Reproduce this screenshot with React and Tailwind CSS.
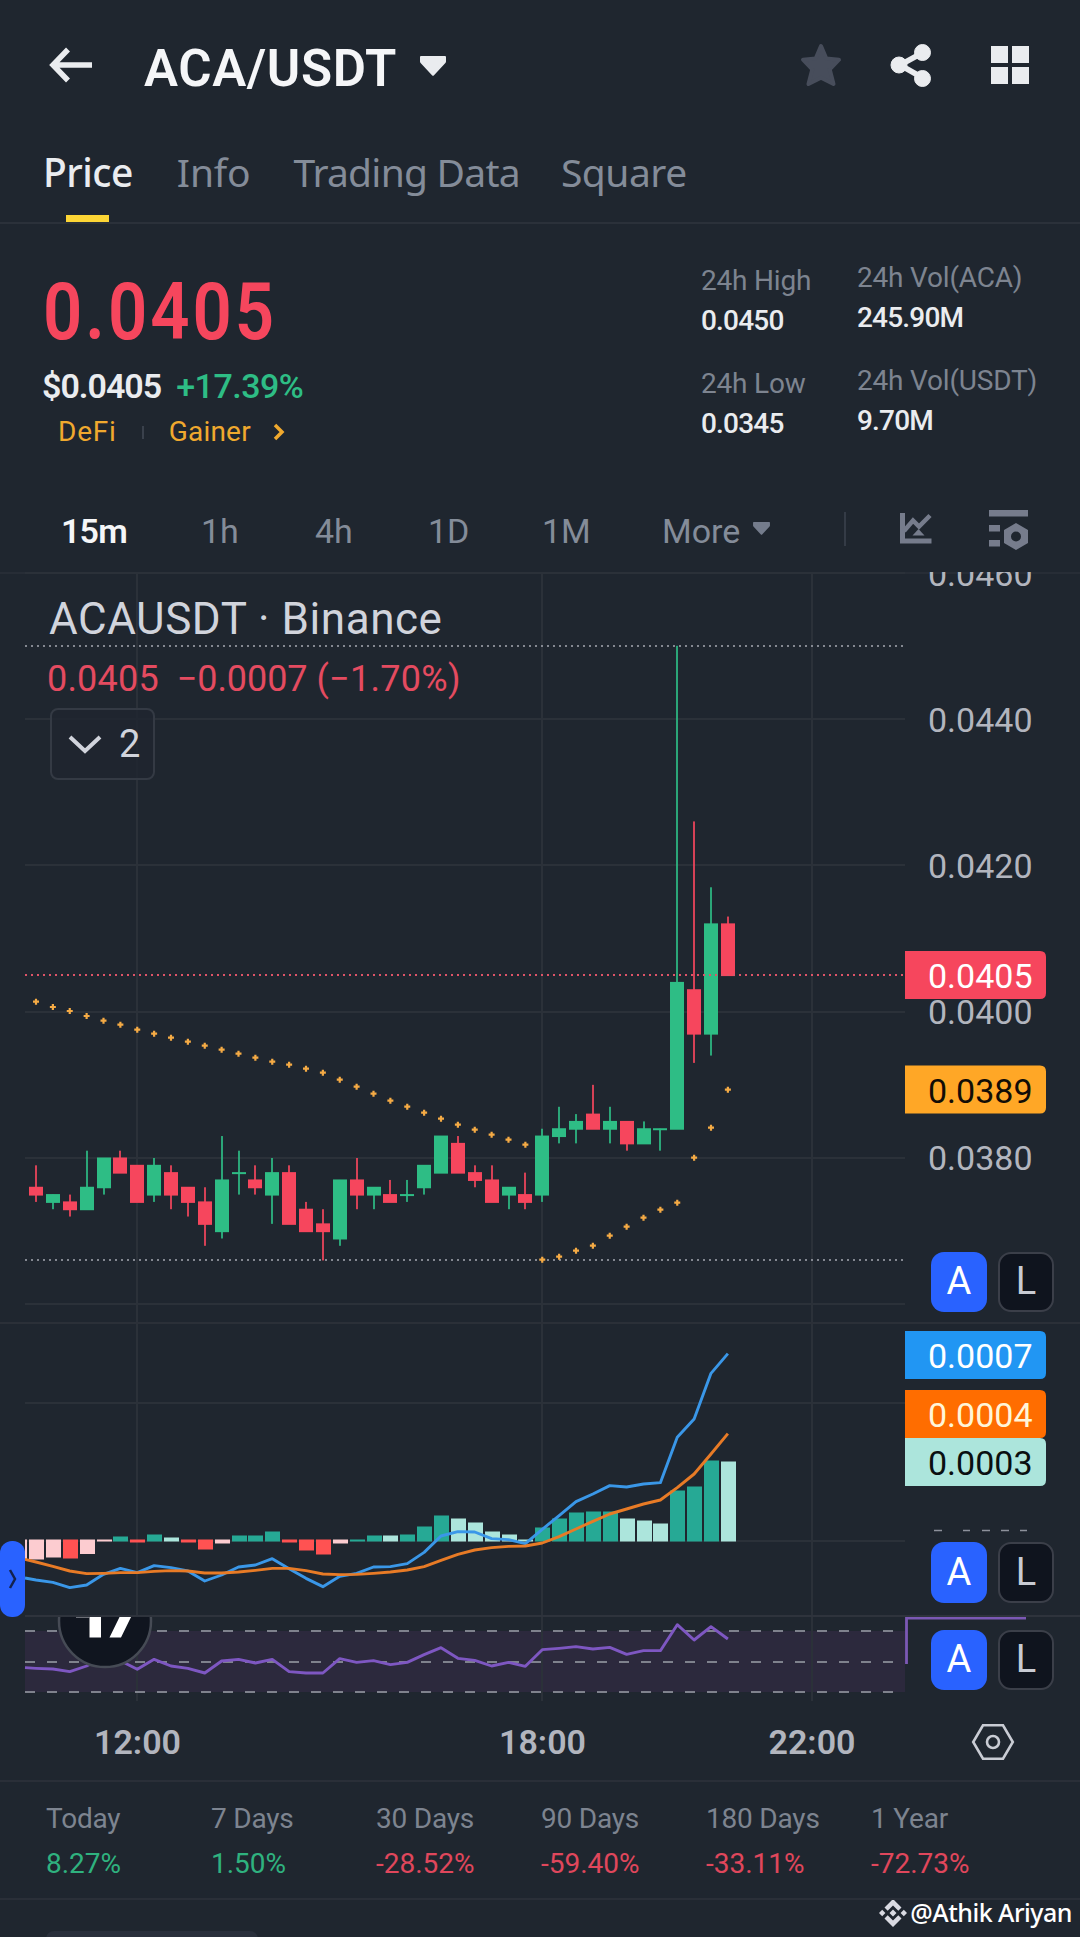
const GREEN = "#2ebd85";
const RED = "#f6465d";
const GRID = "#2b3139";
const STEP = 16.875;
const FIRST_X = 36;

const xAt = (i) => FIRST_X + i * STEP;
const yAt = (price) => 1158 - (price - 380) * 7.3167;

// [high, bodyTop, bodyBottom, low, up] in 1/10000 USDT
const candles = [
  [379, 376, 375, 374, 0],
  [375, 375, 374, 373, 1],
  [375, 374, 373, 372, 0],
  [381, 376, 373, 373, 1],
  [380, 380, 376, 375, 1],
  [381, 380, 378, 378, 0],
  [379, 379, 374, 374, 0],
  [380, 379, 375, 374, 1],
  [379, 378, 375, 373, 0],
  [376, 376, 374, 372, 0],
  [376, 374, 371, 368, 0],
  [383, 377, 370, 369, 1],
  [381, 378, 378, 375, 1],
  [379, 377, 376, 375, 0],
  [380, 378, 375, 371, 1],
  [379, 378, 371, 371, 0],
  [374, 373, 370, 370, 0],
  [373, 371, 370, 366, 0],
  [377, 377, 369, 368, 1],
  [380, 377, 375, 373, 0],
  [376, 376, 375, 373, 1],
  [377, 375, 374, 374, 0],
  [377, 375, 375, 374, 1],
  [379, 379, 376, 375, 1],
  [383, 383, 378, 378, 1],
  [383, 382, 378, 378, 0],
  [379, 378, 377, 376, 0],
  [379, 377, 374, 374, 0],
  [376, 376, 375, 373, 1],
  [378, 375, 374, 373, 0],
  [384, 383, 375, 374, 1],
  [387, 384, 383, 382, 1],
  [386, 385, 384, 382, 1],
  [390, 386, 384, 384, 0],
  [387, 385, 384, 382, 1],
  [385, 385, 382, 381, 0],
  [385, 384, 382, 382, 1],
  [384, 384, 384, 381, 1],
  [450, 404, 384, 384, 1],
  [426, 403, 397, 393, 0],
  [417, 412, 397, 394, 1],
  [413, 412, 405, 405, 0],
];

const sar = [
  1001.7, 1007, 1011, 1016, 1020.7, 1024.7, 1029.7, 1033.7, 1037.7, 1041.7, 1045.7,
  1049.7, 1053.7, 1057.7, 1061.7, 1064.7, 1068.7, 1072.7, 1079.7, 1086.7, 1093.7,
  1100.7, 1106.7, 1112.7, 1118.7, 1124.7, 1129.7, 1134.7, 1139.7, 1144.7, 1259.7,
  1256.7, 1250.7, 1245.7, 1235.7, 1226.7, 1217.7, 1209.7, 1202.7, 1157.7, 1127.7, 1089.7,
];

const HIST = { g: "#26a995", l: "#ace5dc", r: "#ff5252", p: "#fcccd0" };
// [height, colour key], negative heights hang under the zero line
const histogram = [
  [-20, "p"], [-18, "p"], [-19, "r"], [-14.5, "p"], [-2, "p"], [5, "g"], [-3, "r"],
  [7, "g"], [4, "l"], [-3, "r"], [-10, "r"], [-4, "p"], [6, "g"], [6, "g"], [10, "g"],
  [-3, "r"], [-11, "r"], [-15, "r"], [-4, "p"], [2, "g"], [6, "g"], [6, "l"], [7, "g"],
  [15, "g"], [26, "g"], [23, "l"], [19, "l"], [10, "l"], [7, "l"], [2, "l"], [14, "g"],
  [23, "g"], [29, "g"], [30, "g"], [30, "g"], [23, "l"], [21, "l"], [18, "l"],
  [51, "g"], [55, "g"], [81, "g"], [80, "l"],
];

// offsets below y = 1320, three units to a pixel
const macd = [
  780, 787, 803, 795, 763, 745, 758, 737, 743, 753, 783, 765, 741, 735, 716, 746, 775,
  800, 769, 760, 741, 740, 731, 697, 648, 635, 636, 656, 659, 671, 628, 587, 545, 522,
  497, 501, 492, 488, 352, 297, 160, 101,
];
const signal = [
  726, 739, 753, 761, 760, 758, 758, 754, 752, 753, 759, 759, 756, 751, 745, 745, 752,
  762, 764, 763, 760, 756, 750, 740, 721, 703, 690, 683, 679, 678, 669, 650, 627, 604,
  582, 567, 552, 540, 503, 462, 402, 341,
];
const rsi = [
  1045, 1047, 1055, 1038, 1012, 1022, 1048, 1018, 1038, 1045, 1059, 1023, 1018, 1029,
  1018, 1055, 1059, 1059, 1016, 1027, 1022, 1034, 1027, 1004, 983, 1015, 1021, 1038,
  1027, 1039, 989, 985, 980, 987, 982, 1003, 992, 992, 914, 960, 920, 957,
];

const toLine = (values, start) =>
  [`25,${1320 + start / 3}`, ...values.map((v, i) => `${xAt(i)},${1320 + v / 3}`)].join(" ");

const tabs = [
  { label: "Info", className: "ml-[44px] tracking-[-0.2px]" },
  { label: "Trading Data", className: "ml-[43px] tracking-[-0.75px]" },
  { label: "Square", className: "ml-[41px] tracking-[-0.5px]" },
];

const periods = [
  { label: "Today", value: "8.27%" },
  { label: "7 Days", value: "1.50%" },
  { label: "30 Days", value: "-28.52%" },
  { label: "90 Days", value: "-59.40%" },
  { label: "180 Days", value: "-33.11%" },
  { label: "1 Year", value: "-72.73%" },
];

function Caret({ className }) {
  return (
    <svg viewBox="0 0 26 20" className={className} fill="currentColor">
      <path d="M1 0h24q1 0 1 1v4.500q0 .8-.6 1.400L14 19.300q-1 1-2 0L.6 6.900Q0 6.300 0 5.500V1q0-1 1-1z" />
    </svg>
  );
}

function Header() {
  return (
    <header className="flex h-[130px] items-center pl-[49px] text-[#eaecef]">
      <svg viewBox="0 0 44 36" className="h-9 w-11" fill="none" stroke="currentColor" strokeWidth="5.500">
        <path d="M4 18h39M19 2.500L4 18l15 15.500" />
      </svg>
      <h1 className="ml-[51px] mt-[7px] text-[51px] leading-none font-semibold tracking-[0.6px] text-[#f5f6f8]">
        ACA/USDT
      </h1>
      <Caret className="ml-[23px] mt-[2px] h-5 w-[26px]" />
      <svg viewBox="0 0 42 44" className="ml-[354px] h-11 w-[42px]" fill="#474d5b" stroke="#474d5b" strokeWidth="4" strokeLinejoin="round">
        <path d="M21 3l5.300 12.500L39 16.700l-9.300 9.600L33.500 41 21 34.700 8.500 41l3.800-14.700L3 16.700l12.700-1.200z" />
      </svg>
      <svg viewBox="0 0 42 44" className="ml-[48px] h-11 w-[42px]" fill="currentColor" stroke="currentColor">
        <path d="M33 9.500L10 22l23 13" fill="none" strokeWidth="5.500" />
        <circle cx="32.500" cy="9.500" r="8" />
        <circle cx="9" cy="22" r="8" />
        <circle cx="32.500" cy="35.500" r="8" />
      </svg>
      <div className="ml-[59px] grid h-[38px] w-[38px] grid-cols-2 gap-1">
        <span className="bg-[#eaecef]" />
        <span className="bg-[#eaecef]" />
        <span className="bg-[#eaecef]" />
        <span className="bg-[#eaecef]" />
      </div>
    </header>
  );
}

function Tabs() {
  return (
    <nav className="flex h-[94px] border-b-2 border-[#2b313a] pl-[43px] pt-[22px] font-['Noto_Sans',sans-serif] text-[39px] leading-none text-[#848c99]">
      <div className="flex flex-col items-center">
        <span className="font-medium tracking-[-0.5px] text-[#eaecef]">Price</span>
        <span className="mt-[24px] h-[8px] w-[43px] bg-[#fcd535]" />
      </div>
      {tabs.map((tab) => (
        <span key={tab.label} className={tab.className}>
          {tab.label}
        </span>
      ))}
    </nav>
  );
}

function Stat({ label, value, className = "" }) {
  return (
    <div className={className}>
      <p className="whitespace-nowrap tracking-[-0.2px] text-[#7d8490]">{label}</p>
      <p className="mt-3 font-medium tracking-[-0.8px] text-[#eaecef]">{value}</p>
    </div>
  );
}

function Summary() {
  return (
    <section className="flex h-[256px] pl-[43px]">
      <div className="w-[658px] pt-[48px]">
        <p className="origin-left scale-x-[0.86] text-[80px] leading-none font-semibold tracking-[3.500px] text-[#f6465d]">
          0.0405
        </p>
        <p className="mt-[17px] -ml-px flex text-[34px] leading-none tracking-[-1px]">
          <span className="font-semibold text-[#eaecef]">$0.0405</span>
          <span className="ml-[15px] font-medium tracking-[-0.5px] text-[#2ebd85]">+17.39%</span>
        </p>
        <div className="mt-[15px] flex items-center text-[28px] leading-none text-[#f0a92e]">
          <span className="ml-[15px] tracking-[0.8px]">DeFi</span>
          <span className="ml-[25px] h-[13px] w-[2px] bg-[#3a414c]" />
          <span className="ml-[25px] tracking-[0.2px]">Gainer</span>
          <svg viewBox="0 0 12 18" className="ml-[22px] h-[18px] w-3" fill="none" stroke="currentColor" strokeWidth="3.500">
            <path d="M2 2l7 7-7 7" />
          </svg>
        </div>
      </div>
      <div className="w-[156px] pt-[43px] text-[28px] leading-none">
        <Stat label="24h High" value="0.0450" />
        <Stat label="24h Low" value="0.0345" className="mt-[35px]" />
      </div>
      <div className="pt-[40px] text-[28px] leading-none">
        <Stat label="24h Vol(ACA)" value="245.90M" />
        <Stat label="24h Vol(USDT)" value="9.70M" className="mt-[35px]" />
      </div>
    </section>
  );
}

function Toolbar() {
  return (
    <section className="flex h-[92px] items-start pl-[61px] pt-[34px] text-[34px] leading-none text-[#848c99]">
      <span className="w-[140px] font-semibold tracking-[-0.8px] text-[#f5f6f8]">15m</span>
      <span className="w-[114px]">1h</span>
      <span className="w-[113px]">4h</span>
      <span className="w-[114px]">1D</span>
      <span className="w-[120px]">1M</span>
      <span className="w-[91px]">More</span>
      <Caret className="mt-2 h-[13px] w-[17px] text-[#747c8c]" />
      <span className="-mt-0.5 ml-[74px] h-[34px] w-[2px] bg-[#343b46]" />
      <svg viewBox="0 0 32 32" className="ml-[54px] -mt-px h-8 w-8" fill="none" stroke="#767c8c" strokeWidth="5">
        <path d="M2.500 0v28h29" />
        <path d="M4 18l9-10.500 6 6L30 2.500" strokeWidth="4.500" />
        <path d="M18.500 16l6 6.500h-12z" fill="#767c8c" stroke="none" />
      </svg>
      <svg viewBox="0 0 40 40" className="ml-[57px] -mt-1 h-10 w-10" fill="#767c8c">
        <path d="M0 0h39v6.500H0zM0 15h11v6.500H0zM0 30h11v6.500H0z" />
        <path fillRule="evenodd" d="M27 13l12 7v13l-12 7-12-7V20zm0 8.500a5 5 0 1 0 0 10 5 5 0 0 0 0-10z" />
      </svg>
    </section>
  );
}

function TimeGrid({ from, to }) {
  return (
    <g stroke={GRID} strokeWidth="2">
      {[137, 542, 812].map((x) => (
        <line key={x} x1={x} x2={x} y1={from} y2={to} />
      ))}
    </g>
  );
}

function PriceTag({ y, height = 48, value, fill, color }) {
  return (
    <g>
      <path d={`M905 ${y}h135q6 0 6 6v${height - 12}q0 6-6 6h-135z`} fill={fill} />
      <text x="928" y={y + 37} fontSize="34" fill={color}>
        {value}
      </text>
    </g>
  );
}

function ScaleButtons({ className }) {
  return (
    <div className={`absolute left-[931px] flex gap-[11px] text-[38px] leading-none ${className}`}>
      <button className="h-full w-14 rounded-[13px] bg-[#2962ff] pb-0.5 text-white">A</button>
      <button className="h-full w-14 rounded-[13px] border-2 border-[#3b3f49] bg-[#0f141e] pb-0.5 text-[#c8cbd3]">L</button>
    </div>
  );
}

function PricePane() {
  return (
    <div className="relative h-[752px]">
      <svg viewBox="0 572 1080 752" className="block h-full w-full">
        <line x1="0" x2="1080" y1="573" y2="573" stroke="#272d36" strokeWidth="2" />
        <g stroke={GRID} strokeWidth="2">
          {[573, 719, 865, 1012, 1158, 1304].map((y) => (
            <line key={y} x1="25" x2="905" y1={y} y2={y} />
          ))}
        </g>
        <TimeGrid from={572} to={1324} />
        <g fill="#b2b5be" fontSize="34">
          <text x="928" y="586">0.0460</text>
          <text x="928" y="731.500">0.0440</text>
          <text x="928" y="878">0.0420</text>
          <text x="928" y="1024">0.0400</text>
          <text x="928" y="1170">0.0380</text>
        </g>
        <g strokeWidth="2" strokeDasharray="2 4">
          <line x1="25" x2="904" y1="646" y2="646" stroke="#848891" />
          <line x1="25" x2="904" y1="1260" y2="1260" stroke="#848891" />
        </g>
        {candles.map(([high, top, bottom, low, up], i) => {
          const color = up ? GREEN : RED;
          const x = Math.round(xAt(i));
          return (
            <g key={i} fill={color}>
              <rect x={x - 1} width="2" y={yAt(high)} height={yAt(low) - yAt(high)} opacity="0.85" />
              <rect x={x - 7} width="14" y={yAt(top) - 0.5} height={Math.max(2, yAt(bottom) - yAt(top) + 1.5)} />
            </g>
          );
        })}
        <line x1="25" x2="904" y1="975" y2="975" stroke="#dd5468" strokeWidth="2" strokeDasharray="2 4" />
        <path
          d={sar.map((y, i) => `M${xAt(i) - 3} ${y}h6m-3-3v6`).join("")}
          stroke="#f5ab45"
          strokeWidth="2.200"
          fill="none"
        />
        <PriceTag y={951} value="0.0405" fill={RED} color="#fff" />
        <PriceTag y={1065.500} value="0.0389" fill="#ffa726" color="#120d06" />
        <line x1="0" x2="1080" y1="1323" y2="1323" stroke="#2b3038" strokeWidth="2" />
      </svg>
      <div className="absolute left-[47px] top-[25px] text-[#d1d4dc]">
        <p className="ml-[2px] text-[44px] leading-none tracking-[0.55px]">ACAUSDT · Binance</p>
        <p className="mt-[20px] flex text-[36px] leading-none text-[#e44b60]">
          <span className="tracking-[0.2px]">0.0405</span>
          <span className="ml-[18px] tracking-[-0.1px]">−0.0007</span>
          <span className="ml-[9px] tracking-[0.3px]">(−1.70%)</span>
        </p>
        <div className="mt-[11px] ml-[3px] flex h-[72px] w-[105px] items-center rounded-lg border-2 border-[#343a44] bg-[#1f262f]/80 pl-[16px]">
          <svg viewBox="0 0 34 19" className="h-[19px] w-[34px]" fill="none" stroke="currentColor" strokeWidth="4">
            <path d="M2 2l15 14L32 2" />
          </svg>
          <span className="ml-[17px] text-[38px] leading-none">2</span>
        </div>
      </div>
      <ScaleButtons className="top-[680px] h-[60px]" />
    </div>
  );
}

function MacdPane() {
  return (
    <div className="relative h-[291px]">
      <svg viewBox="0 1324 1080 291" className="block h-full w-full">
        <TimeGrid from={1324} to={1615} />
        <g stroke={GRID} strokeWidth="2">
          <line x1="25" x2="905" y1="1403" y2="1403" />
          <line x1="25" x2="905" y1="1541" y2="1541" />
        </g>
        <rect x="25" y="1539.500" width="2" height="20" fill={HIST.p} />
        {histogram.map(([value, key], i) => (
          <rect
            key={i}
            x={Math.round(xAt(i)) - 7}
            width="15"
            y={value > 0 ? 1541.500 - value : 1539.500}
            height={Math.abs(value)}
            fill={HIST[key]}
          />
        ))}
        <polyline points={toLine(macd, 774)} fill="none" stroke="#3a97e8" strokeWidth="2.900" strokeLinejoin="round" />
        <polyline points={toLine(signal, 718)} fill="none" stroke="#e87b26" strokeWidth="2.900" strokeLinejoin="round" />
        <PriceTag y={1331} value="0.0007" fill="#2196f3" color="#fff" />
        <PriceTag y={1390} value="0.0004" fill="#ff6d00" color="#fff5d8" />
        <PriceTag y={1438} value="0.0003" fill="#ace5dc" color="#0a0f10" />
        <path d="M934 1530.500h8M963 1530.500h7M982 1530.500h8M1001 1530.500h8M1020 1530.500h7" stroke="#8d919b" strokeWidth="1.500" />
      </svg>
      <ScaleButtons className="top-[218px] h-[61px]" />
      <div className="absolute left-0 top-[217px] flex h-[76px] w-[25px] items-center rounded-[12px] bg-[#2962ff] pl-[8px]">
        <svg viewBox="0 0 9 20" className="h-5 w-[9px]" fill="none" stroke="#13224f" strokeWidth="2.500">
          <path d="M2 1l5 9-5 9" />
        </svg>
      </div>
    </div>
  );
}

function RsiPane() {
  return (
    <div className="relative h-[87px]">
      <svg viewBox="0 1615 1080 87" className="block h-full w-full">
        <rect x="25" y="1631" width="880" height="61" fill="#2c293d" />
        <TimeGrid from={1615} to={1701} />
        <g stroke="#7f828d" strokeWidth="2" strokeDasharray="10 12">
          <line x1="25" x2="900" y1="1631" y2="1631" />
          <line x1="25" x2="900" y1="1662" y2="1662" />
          <line x1="25" x2="900" y1="1692" y2="1692" />
        </g>
        <polyline points={toLine(rsi, 1043)} fill="none" stroke="#7e57c2" strokeWidth="2.900" strokeLinejoin="round" />
        <path d="M906.500 1664v-46h119.500" fill="none" stroke="#7b58b4" strokeWidth="2.800" />
        <circle cx="105" cy="1621" r="46" fill="#10151f" stroke="#464b55" strokeWidth="2.500" />
        <path d="M89.500 1614H101v23.500H89.500zM121 1614h11.500l-11.500 23.500h-11.500z" fill="#fff" />
        <path d="M76 1617h13.500" stroke="#8a8d95" strokeWidth="1.500" />
        <line x1="25" x2="1080" y1="1616" y2="1616" stroke="#2e333c" strokeWidth="2" />
      </svg>
      <ScaleButtons className="top-[15px] h-[60px]" />
    </div>
  );
}

function TimeAxis() {
  return (
    <svg viewBox="0 1702 1080 78" className="block h-[78px] w-full">
      <g fill="#b2b5be" fontSize="34" fontWeight="600" textAnchor="middle">
        <text x="137.500" y="1754">12:00</text>
        <text x="542.500" y="1754">18:00</text>
        <text x="812" y="1754">22:00</text>
      </g>
      <g fill="none" stroke="#c9ccd4" strokeWidth="2.600">
        <path d="M983 1725.300h20l9.800 16.700-9.800 16.700h-20l-9.800-16.700z" />
        <circle cx="993" cy="1742" r="6" />
      </g>
    </svg>
  );
}

function Periods() {
  return (
    <section className="flex h-[120px] border-y-2 border-[#2a2f38] pl-[46px] pt-[23px] text-[28px] leading-none">
      {periods.map(({ label, value }) => (
        <div key={label} className="w-[165px] shrink-0">
          <p className="tracking-[-0.2px] text-[#7d8490]">{label}</p>
          <p className={`mt-[17px] ${value.startsWith("-") ? "text-[#e0475c]" : "text-[#2fb27f]"}`}>{value}</p>
        </div>
      ))}
    </section>
  );
}

function Footer() {
  return (
    <footer className="flex h-[37px] items-start justify-between overflow-hidden pl-[46px] pr-[8px]">
      <div className="mt-[31px] h-10 w-[212px] rounded-lg bg-[#292f3b]" />
      <div className="flex text-white">
        <svg viewBox="0 0 28 28" className="-mt-px h-7 w-7" fill="#d9dae2">
          <path d="M14 0l8.500 8.500-3.200 3.200L14 6.400l-5.300 5.300-3.200-3.200zM14 28l8.500-8.500-3.200-3.200-5.300 5.300-5.300-5.300-3.200 3.200zM3.200 10.800L6.400 14l-3.200 3.200L0 14zM24.800 10.800L28 14l-3.200 3.200-3.200-3.200zM14 10.500l3.500 3.500-3.500 3.500-3.500-3.500z" />
        </svg>
        <span className="ml-[3px] font-['Noto_Sans',sans-serif] text-[25px] leading-none font-medium tracking-[-0.500px]">
          @Athik Ariyan
        </span>
      </div>
    </footer>
  );
}

export default function App() {
  return (
    <main className="h-[1937px] w-[1080px] overflow-hidden bg-[#1f262f] font-['Roboto',sans-serif]">
      <Header />
      <Tabs />
      <Summary />
      <Toolbar />
      <PricePane />
      <MacdPane />
      <RsiPane />
      <TimeAxis />
      <Periods />
      <Footer />
    </main>
  );
}
